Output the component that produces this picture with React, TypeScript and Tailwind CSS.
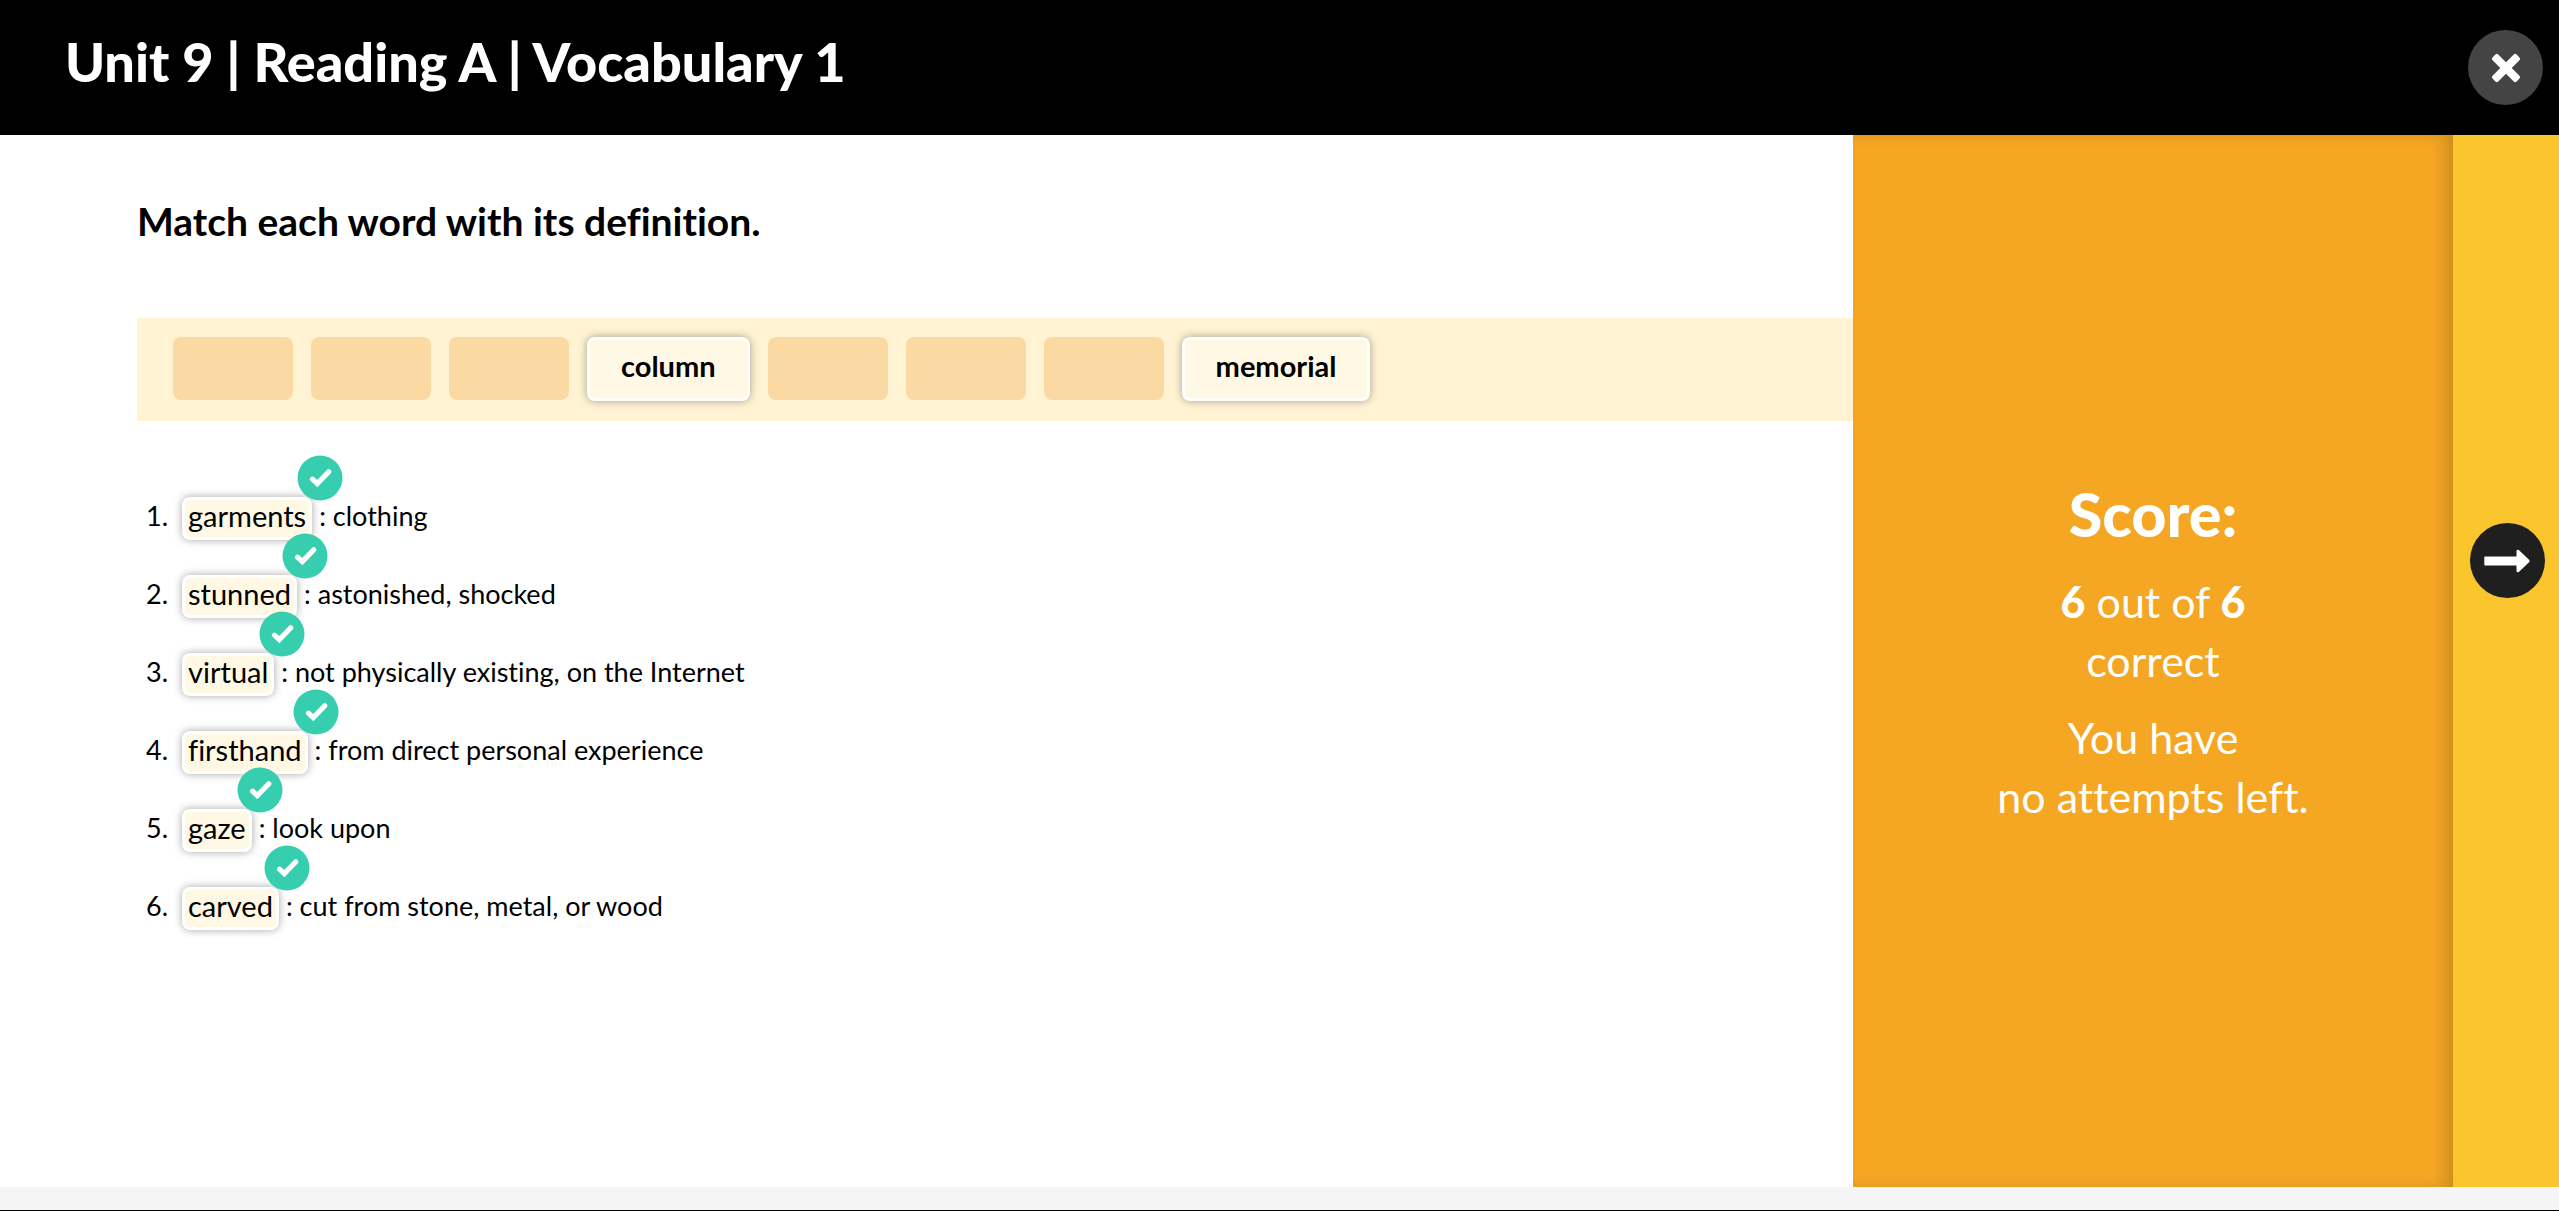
import React from "react";

const wordBank = ["", "", "", "column", "", "", "", "memorial"];

const answers = [
  { word: "garments", definition: "clothing" },
  { word: "stunned", definition: "astonished, shocked" },
  { word: "virtual", definition: "not physically existing, on the Internet" },
  { word: "firsthand", definition: "from direct personal experience" },
  { word: "gaze", definition: "look upon" },
  { word: "carved", definition: "cut from stone, metal, or wood" },
];

function CorrectBadge() {
  return (
    <svg
      viewBox="0 0 46 46"
      role="img"
      aria-label="Correct"
      className="absolute -top-[45px] -right-[34px] z-10 w-[46px] h-[46px]"
    >
      <circle cx="23" cy="23" r="22.5" fill="#36ceae" />
      <path
        d="M15.5 24.2 L20.3 28.6 L31.8 16.8"
        fill="none"
        stroke="#fff"
        strokeWidth="5.2"
        strokeLinecap="round"
        strokeLinejoin="miter"
      />
    </svg>
  );
}

export default function App() {
  return (
    <div className="min-h-screen flex flex-col bg-[#f5f5f5] border-b border-black font-['Lato','Noto_Sans',sans-serif] [font-variant-ligatures:none] text-black">
      <header className="flex items-start justify-between h-[135px] bg-black pl-[65px] pr-4">
        <h1 className="mt-[30px] text-[54px] leading-[64px] font-black text-white">
          Unit 9 | Reading A | Vocabulary 1
        </h1>
        <button
          aria-label="Close"
          className="mt-[30px] w-[75px] h-[75px] rounded-full bg-[#444] flex items-center justify-center"
        >
          <svg viewBox="0 0 30 30" className="w-[30px] h-[30px]" fill="#fff">
            <rect x="-2" y="11" width="34" height="8" rx="2" transform="rotate(45 15 15)" />
            <rect x="-2" y="11" width="34" height="8" rx="2" transform="rotate(-45 15 15)" />
          </svg>
        </button>
      </header>

      <main className="flex flex-1 mb-[23px]">
        <section className="flex-1 bg-white pl-[137px] pt-[62px]">
          <h2 className="text-[39px] leading-[48px] font-bold">
            Match each word with its definition.
          </h2>

          {/* Word bank */}
          <div className="mt-[73px] h-[103px] bg-[#fff3d4] pl-9 pb-[2px] flex items-center gap-[18px]">
            {wordBank.map((word, index) =>
              word ? (
                <button
                  key={index}
                  className="h-16 px-[31px] pb-[6px] border-[3px] border-white rounded-lg bg-[#fff8e4] text-[29px] leading-8 font-bold shadow-[0_0_8px_rgba(0,0,0,0.35)]"
                >
                  {word}
                </button>
              ) : (
                <div
                  key={index}
                  className="w-[120px] h-[63px] rounded-lg bg-[#fbd9a2]"
                />
              )
            )}
          </div>

          {/* Answered items */}
          <ol className="mt-[76px] flex flex-col gap-[35px] text-[27px] leading-8">
            {answers.map((item, index) => (
              <li key={index} className="flex h-[43px]">
                <span className="w-[45px] pl-[9px] pt-[3px]">{index + 1}.</span>
                <span className="relative h-[43px] px-[3px] border-[3px] border-white rounded-lg bg-[#fff8e4] text-[29px] leading-8 shadow-[0_0_8px_rgba(0,0,0,0.35)]">
                  {item.word}
                  <CorrectBadge />
                </span>
                <span className="ml-[7px] pt-[3px]">: {item.definition}</span>
              </li>
            ))}
          </ol>
        </section>

        <aside className="w-[600px] bg-[#f5a623] pt-[344px] text-center text-white text-[43px] leading-[59px] shadow-[inset_-10px_0_18px_-4px_rgba(0,0,0,0.18)]">
          <h2 className="text-[61px] leading-[70px] font-black">Score:</h2>
          <p className="mt-[23px]">
            <b className="font-black">6</b> out of <b className="font-black">6</b>
            <br />
            correct
          </p>
          <p className="mt-[18px]">
            You have
            <br />
            no attempts left.
          </p>
        </aside>

        <nav className="w-[106px] bg-[#fbc52d] flex flex-col items-center pt-[388px]">
          <button
            aria-label="Next"
            className="ml-[2px] w-[75px] h-[75px] rounded-full bg-[#1f1f1f] flex items-center justify-center"
          >
            <svg viewBox="0 0 46 24" className="w-[46px] h-6">
              <path
                d="M1 7.5 H32.5 V1.8 Q33 .2 34.8 1 L45.3 11 Q46 12 45.3 13 L34.8 23 Q33 23.8 32.5 22.2 V16.5 H1 Q.3 16.5 .3 15.8 V8.2 Q.3 7.5 1 7.5 Z"
                fill="#fff"
              />
            </svg>
          </button>
        </nav>
      </main>
    </div>
  );
}
